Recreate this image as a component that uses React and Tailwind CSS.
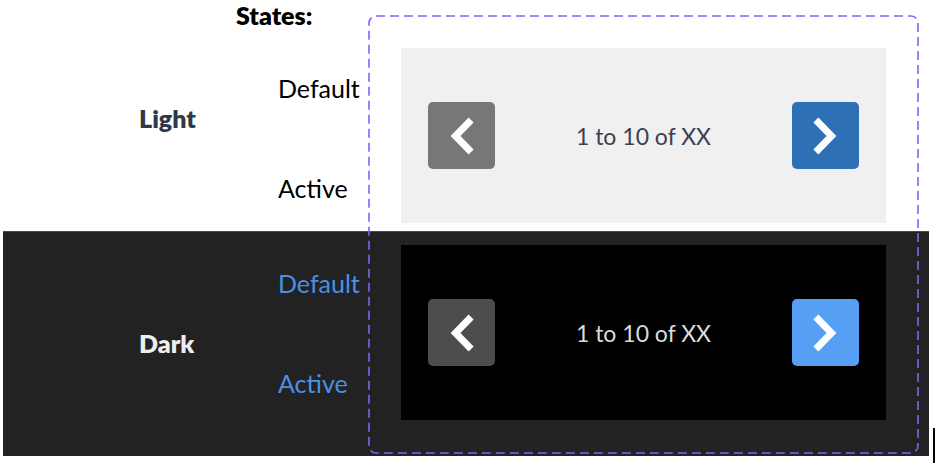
import React from 'react';

const FONT = { fontFamily: 'Lato, "Noto Sans", sans-serif' };

function Chevron({ dir }) {
  const pts = dir === 'left' ? '21.1,3 5.5,19 21.1,35' : '2.9,3 18.5,19 2.9,35';
  return (
    <svg width="24" height="38" viewBox="0 0 24 38" fill="none">
      <polyline points={pts} stroke="#ffffff" strokeWidth="7" strokeLinecap="butt" strokeLinejoin="miter" />
    </svg>
  );
}

function Pager({ dark }) {
  return (
    <div
      className={`flex h-[175px] w-[485px] items-center justify-between px-[27px] ${
        dark ? 'bg-black' : 'bg-[#f0f0f0]'
      }`}
    >
      <button
        type="button"
        className={`flex h-[67px] w-[67px] items-center justify-center rounded-[5px] ${
          dark ? 'bg-[#4d4d4d]' : 'bg-[#777777]'
        }`}
      >
        <Chevron dir="left" />
      </button>
      <span className={`text-[23px] leading-[30px] ${dark ? 'text-[#dcdcdc]' : 'text-[#3a4250]'}`}>
        1 to 10 of XX
      </span>
      <button
        type="button"
        className={`flex h-[67px] w-[67px] items-center justify-center rounded-[5px] ${
          dark ? 'bg-[#579ff5]' : 'bg-[#2d70b5]'
        }`}
      >
        <Chevron dir="right" />
      </button>
    </div>
  );
}

export default function App() {
  return (
    <div className="relative h-[466px] w-[936px] overflow-hidden bg-white" style={FONT}>
      {/* heading */}
      <div className="h-[34px] pl-[236px]">
        <h1 className="text-[25px] font-extrabold leading-[30px] text-black">States:</h1>
      </div>

      {/* light band */}
      <div className="flex h-[197px] items-start">
        <div className="w-[278px] pl-[139px] pt-[69px]">
          <span className="text-[25px] font-extrabold leading-[30px] text-[#2f3a48]">Light</span>
        </div>
        <div className="flex w-[123px] flex-col gap-[70px] pt-[39px] text-[25px] leading-[30px] text-black">
          <span>Default</span>
          <span>Active</span>
        </div>
        <div className="pt-[14px]">
          <Pager />
        </div>
      </div>

      {/* dark band */}
      <div className="ml-[3px] flex h-[225px] w-[926px] items-start border-t border-[#4a4a4a] bg-[#222222]">
        <div className="w-[275px] pl-[136px] pt-[96px]">
          <span className="text-[25px] font-extrabold leading-[30px] text-[#eeeeee]">Dark</span>
        </div>
        <div className="flex w-[123px] flex-col gap-[70px] pt-[36px] text-[25px] leading-[30px] text-[#4a90e2]">
          <span>Default</span>
          <span>Active</span>
        </div>
        <div className="pt-[13px]">
          <Pager dark />
        </div>
      </div>

      {/* dashed selection outline */}
      <svg
        className="pointer-events-none absolute left-[368px] top-[15px]"
        width="551"
        height="439"
        viewBox="0 0 551 439"
        fill="none"
      >
        <rect
          x="1"
          y="1"
          width="549"
          height="437"
          rx="7"
          stroke="#8f5cf7"
          strokeWidth="1.6"
          strokeDasharray="9 5"
        />
      </svg>

      {/* text caret */}
      <div className="absolute left-[933px] top-[428px] h-[35px] w-[2px] bg-black" />
    </div>
  );
}
